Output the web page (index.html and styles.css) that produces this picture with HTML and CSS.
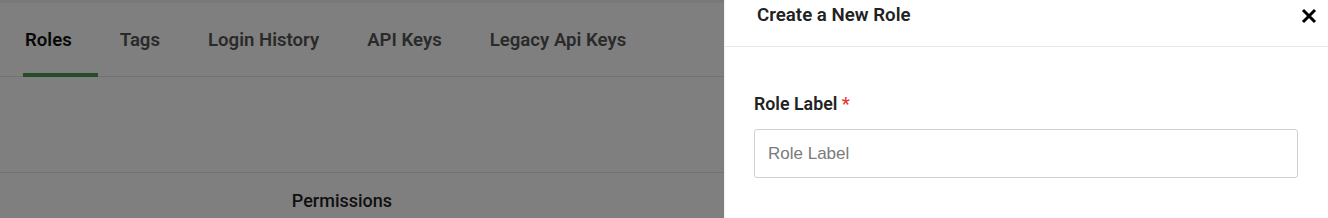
FILE: index.html
```html
<!DOCTYPE html>
<html>
<head>
<meta charset="utf-8">
<link rel="stylesheet" href="styles.css">
</head>
<body>
<div class="page">
  <div class="topbar"></div>
  <nav class="tabs">
    <span class="tab active">Roles</span>
    <span class="tab">Tags</span>
    <span class="tab">Login History</span>
    <span class="tab">API Keys</span>
    <span class="tab">Legacy Api Keys</span>
  </nav>
  <div class="toolbar"></div>
  <div class="table-head">
    <div class="th">Permissions</div>
  </div>
</div>
<div class="overlay"></div>
<aside class="drawer">
  <header class="drawer-head">
    <h2 class="drawer-title">Create a New Role</h2>
    <button class="close" aria-label="Close">
      <svg width="16" height="16" viewBox="0 0 16 16"><path d="M2 2 L14 14 M14 2 L2 14" stroke="#000" stroke-width="3" stroke-linecap="butt"/></svg>
    </button>
  </header>
  <div class="drawer-body">
    <label class="field-label">Role Label <span class="req">*</span></label>
    <input class="field-input" type="text" placeholder="Role Label">
  </div>
</aside>
</body>
</html>
```
FILE: styles.css
```css
* { box-sizing: border-box; }
html, body { margin: 0; padding: 0; }
body {
  width: 1328px;
  height: 218px;
  overflow: hidden;
  position: relative;
  background: #fff;
  font-family: Roboto, "Noto Sans", sans-serif;
}
.page { width: 1328px; }
.topbar { height: 3px; background: #f2f2f2; }
.tabs {
  display: flex;
  gap: 48px;
  padding-left: 25px;
  height: 74px;
  border-bottom: 1px solid #e4e4e4;
  align-items: center;
}
.tab {
  position: relative;
  font-size: 18.6px;
  font-weight: 600;
  color: #555;
  line-height: 22px;
  padding-top: 1px;
}
.tab.active { color: #111; }
.tab.active::after {
  content: "";
  position: absolute;
  left: -2px;
  width: 75px;
  top: 45px;
  height: 4px;
  background: #4a9a50;
}
.toolbar { height: 96px; border-bottom: 1px solid #e4e4e4; }
.table-head { display: flex; }
.th {
  width: 684px;
  text-align: center;
  font-size: 18px;
  font-weight: 500;
  color: #222;
  padding-top: 17px;
  line-height: 22px;
}
.overlay {
  position: absolute;
  inset: 0;
  background: rgba(0,0,0,0.5);
}
.drawer {
  position: absolute;
  top: 0;
  right: 0;
  bottom: 0;
  width: 604px;
  background: #fff;
  border-left: 1px solid #f0f0f0;
}
.drawer-head {
  height: 47px;
  border-bottom: 1px solid #e6e6e6;
  display: flex;
  justify-content: space-between;
  align-items: flex-start;
  padding: 4px 11px 0 32px;
}
.drawer-title {
  margin: 0;
  font-size: 18.7px;
  font-weight: 600;
  color: #222;
  line-height: 22px;
}
.close {
  border: 0;
  background: none;
  padding: 0;
  margin-top: 4px;
  width: 16px;
  height: 16px;
  display: block;
}
.close svg { display: block; }
.drawer-body {
  padding: 46px 29px 0 29px;
  display: flex;
  flex-direction: column;
}
.field-label {
  font-size: 17.8px;
  font-weight: 600;
  color: #222;
  line-height: 22px;
}
.req { color: #e53935; }
.field-input {
  margin-top: 14px;
  width: 544px;
  height: 49px;
  border: 1px solid #d0d0d0;
  border-radius: 3px;
  padding: 0 13px;
  font-family: "Liberation Sans", Arial, sans-serif;
  font-size: 17px;
  color: #333;
  outline: none;
}
.field-input::placeholder { color: #7a7a7a; }
```
